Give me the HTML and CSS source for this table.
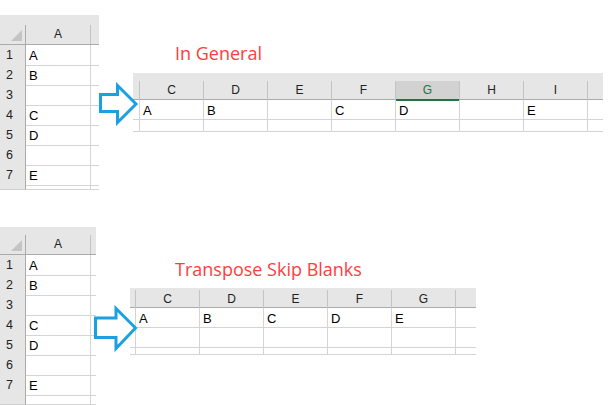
FILE: index.html
```html
<!DOCTYPE html>
<html>
<head>
<meta charset="utf-8">
<link rel="stylesheet" href="styles.css">
</head>
<body>
<div class="page">
  <section class="sec sec1">
    <div class="lsheet ls1">
      <div class="lhead"><div class="corner"><span class="tri"></span></div><div class="hc">A</div><div class="hc end"></div></div>
      <div class="lrow"><div class="rh">1</div><div class="c">A</div><div class="c end"></div></div>
      <div class="lrow"><div class="rh">2</div><div class="c">B</div><div class="c end"></div></div>
      <div class="lrow"><div class="rh">3</div><div class="c"></div><div class="c end"></div></div>
      <div class="lrow"><div class="rh">4</div><div class="c">C</div><div class="c end"></div></div>
      <div class="lrow"><div class="rh">5</div><div class="c">D</div><div class="c end"></div></div>
      <div class="lrow"><div class="rh">6</div><div class="c"></div><div class="c end"></div></div>
      <div class="lrow"><div class="rh">7</div><div class="c">E</div><div class="c end"></div></div>
      <div class="lrow part"><div class="rh"></div><div class="c"></div><div class="c end"></div></div>
    </div>
    <svg class="arrow a1" width="43" height="44" viewBox="0 0 43 44">
      <polygon points="3.5,12.5 20.5,12.5 20.5,3.5 39,22 20.5,40.5 20.5,29.5 3.5,29.5" />
    </svg>
    <div class="right r1">
      <div class="title t1">In General</div>
      <div class="rsheet rs1">
        <div class="rhead">
          <div class="stub"></div><div class="hc">C</div><div class="hc">D</div><div class="hc">E</div><div class="hc">F</div><div class="hc sel">G</div><div class="hc">H</div><div class="hc">I</div><div class="hc end"></div>
        </div>
        <div class="rrow">
          <div class="stub"></div><div class="c">A</div><div class="c">B</div><div class="c"></div><div class="c">C</div><div class="c">D</div><div class="c"></div><div class="c">E</div><div class="c end"></div>
        </div>
        <div class="rrow part">
          <div class="stub"></div><div class="c"></div><div class="c"></div><div class="c"></div><div class="c"></div><div class="c"></div><div class="c"></div><div class="c"></div><div class="c end"></div>
        </div>
      </div>
    </div>
  </section>

  <section class="sec sec2">
    <div class="lsheet ls2">
      <div class="lhead"><div class="corner"><span class="tri"></span></div><div class="hc">A</div><div class="hc end"></div></div>
      <div class="lrow"><div class="rh">1</div><div class="c">A</div><div class="c end"></div></div>
      <div class="lrow"><div class="rh">2</div><div class="c">B</div><div class="c end"></div></div>
      <div class="lrow"><div class="rh">3</div><div class="c"></div><div class="c end"></div></div>
      <div class="lrow"><div class="rh">4</div><div class="c">C</div><div class="c end"></div></div>
      <div class="lrow"><div class="rh">5</div><div class="c">D</div><div class="c end"></div></div>
      <div class="lrow"><div class="rh">6</div><div class="c"></div><div class="c end"></div></div>
      <div class="lrow"><div class="rh">7</div><div class="c">E</div><div class="c end"></div></div>
      <div class="lrow part"><div class="rh"></div><div class="c"></div><div class="c end"></div></div>
    </div>
    <svg class="arrow a2" width="47" height="48" viewBox="0 0 47 48">
      <polygon points="3.5,13 24,13 24,3.5 43.5,23 24,43.5 24,32.5 3.5,32.5" />
    </svg>
    <div class="right r2">
      <div class="title t2">Transpose Skip Blanks</div>
      <div class="rsheet rs2">
        <div class="rhead">
          <div class="stub"></div><div class="hc">C</div><div class="hc">D</div><div class="hc">E</div><div class="hc">F</div><div class="hc">G</div><div class="hc end"></div>
        </div>
        <div class="rrow">
          <div class="stub"></div><div class="c">A</div><div class="c">B</div><div class="c">C</div><div class="c">D</div><div class="c">E</div><div class="c end"></div>
        </div>
        <div class="rrow">
          <div class="stub"></div><div class="c"></div><div class="c"></div><div class="c"></div><div class="c"></div><div class="c"></div><div class="c end"></div>
        </div>
        <div class="rrow part2">
          <div class="stub"></div><div class="c"></div><div class="c"></div><div class="c"></div><div class="c"></div><div class="c"></div><div class="c end"></div>
        </div>
      </div>
    </div>
  </section>
</div>
</body>
</html>
```

FILE: styles.css
```css
* { box-sizing: border-box; }
html, body { margin: 0; padding: 0; background: #fff; }
.page {
  width: 610px;
  height: 405px;
  overflow: hidden;
  font-family: "Liberation Sans", Arial, sans-serif;
  color: #000;
}
.sec { display: flex; align-items: flex-start; }
.sec1 { height: 205px; }
.sec2 { height: 200px; }

/* left sheets */
.lsheet { flex: none; }
.ls1 { margin-top: 15px; width: 99px; }
.ls2 { margin-top: 22px; width: 96px; }
.ls1 .lhead, .ls1 .lrow { grid-template-columns: 26px 65px 8px; }
.ls2 .lhead, .ls2 .lrow { grid-template-columns: 26px 65px 5px; }

.lhead {
  display: grid;
  background: #e6e6e6;
  border-bottom: 1px solid #ababab;
}
.ls1 .lhead { height: 30px; padding-top: 10px; }
.ls2 .lhead { height: 28px; padding-top: 8px; }
.lhead .hc, .rhead .hc {
  border-right: 1px solid #c3c3c3;
  font-size: 12px;
  line-height: 19px;
  text-align: center;
  color: #222;
}
.lhead .hc.end, .rhead .hc.end { border-right: none; }
.corner {
  border-right: 1px solid #ababab;
  position: relative;
}
.tri {
  position: absolute;
  right: 3px;
  bottom: 3px;
  width: 11px;
  height: 11px;
  background: #c4c4c4;
  clip-path: polygon(100% 0, 100% 100%, 0 100%);
}
.lrow {
  display: grid;
  height: 20px;
}
.lrow.part { height: 10px; }
.ls1 .lrow.part { height: 5px; }
.rh {
  background: #e6e6e6;
  border-right: 1px solid #ababab;
  border-bottom: 1px solid #d0d0d0;
  font-size: 12.5px;
  line-height: 20px;
  padding-left: 6px;
  color: #222;
}
.c {
  border-right: 1px solid #d4d4d4;
  border-bottom: 1px solid #d4d4d4;
  font-size: 13px;
  line-height: 20px;
  padding-left: 3px;
  padding-top: 1px;
  overflow: hidden;
  white-space: nowrap;
}
.c.end { border-right: none; }

/* arrows */
.arrow { flex: none; display: block; position: relative; z-index: 1; }
.arrow polygon {
  fill: #fff;
  stroke: #1ba1e2;
  stroke-width: 3;
  stroke-linejoin: miter;
}
.a1 { margin-top: 82px; margin-left: -2px; margin-right: -7px; }
.a2 { margin-top: 100px; margin-left: -4px; margin-right: -9px; }

/* right side */
.right { flex: none; display: flex; flex-direction: column; }
.r1 { margin-top: 41px; }
.r2 { margin-top: 52px; }
.title {
  font-family: "Open Sans", "Noto Sans", sans-serif;
  font-size: 18px;
  line-height: 24px;
  color: #ff3d3d;
  white-space: nowrap;
}
.t1 { padding-left: 42px; }
.t2 { padding-left: 45px; }

.rsheet { flex: none; }
.rs1 { margin-top: 8px; width: 470px; }
.rs2 { margin-top: 7px; width: 346px; }
.rs1 .rhead, .rs1 .rrow { grid-template-columns: 7px repeat(7, 64px) 15px; }
.rs2 .rhead, .rs2 .rrow { grid-template-columns: 6px repeat(5, 64px) 20px; }

.rhead {
  display: grid;
  background: #e6e6e6;
  border-bottom: 1px solid #ababab;
}
.rs1 .rhead { height: 27px; padding-top: 8px; }
.rs2 .rhead { height: 20px; padding-top: 2px; }
.rhead .stub { border-right: 1px solid #c3c3c3; }
.rhead .hc { line-height: 18px; }
.rhead .hc.sel {
  background: #d2d2d2;
  color: #217346;
  border-bottom: 2px solid #217346;
}
.rrow { display: grid; height: 20px; }
.rrow.part { height: 12px; }
.rrow.part2 { height: 7px; }
.rrow .stub {
  border-right: 1px solid #d4d4d4;
  border-bottom: 1px solid #d4d4d4;
}
```
